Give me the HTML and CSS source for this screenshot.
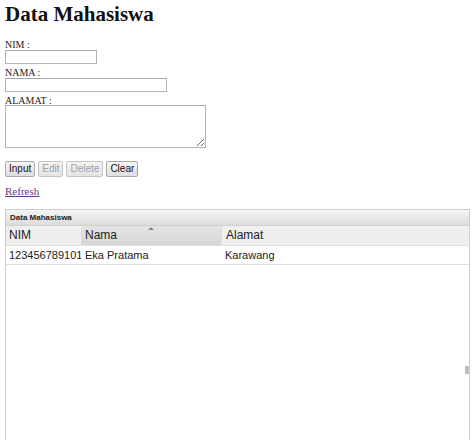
FILE: index.html
```
<!DOCTYPE html>
<html>
<head>
<meta charset="utf-8">
<link rel="stylesheet" href="styles.css">
</head>
<body>
<h1 class="title">Data Mahasiswa</h1>
<form class="form">
  <label class="lbl">NIM :</label>
  <input class="inp inp-nim" type="text">
  <label class="lbl">NAMA :</label>
  <input class="inp inp-nama" type="text">
  <label class="lbl">ALAMAT :</label>
  <textarea class="inp inp-alamat"></textarea>
  <div class="btns">
    <button type="button" class="btn">Input</button>
    <button type="button" class="btn dis">Edit</button>
    <button type="button" class="btn dis">Delete</button>
    <button type="button" class="btn">Clear</button>
  </div>
</form>
<a class="refresh" href="#">Refresh</a>
<div class="panel">
  <div class="panel-title">Data Mahasiswa</div>
  <div class="row head">
    <div class="cell c1">NIM</div>
    <div class="cell c2 sorted">Nama<span class="arrow"></span></div>
    <div class="cell c3">Alamat</div>
  </div>
  <div class="row data">
    <div class="cell c1">123456789101</div>
    <div class="cell c2">Eka Pratama</div>
    <div class="cell c3">Karawang</div>
  </div>
  <div class="thumb"></div>
</div>
</body>
</html>
```
FILE: styles.css
```
html, body { margin: 0; padding: 0; background: #fff; }
body { padding: 0 5px; font-family: "Liberation Serif", "Times New Roman", serif; color: #111; overflow: hidden; height: 440px; }
.title { margin: 0; padding-top: 2px; font-size: 21px; line-height: 24px; font-weight: bold; }
.form { display: flex; flex-direction: column; align-items: flex-start; margin-top: 14px; }
.lbl { font-size: 10px; line-height: 10px; height: 10px; color: #222; }
.inp { box-sizing: border-box; border: 1px solid #b5b5b5; border-top-color: #a8a8a8; background: #fff; margin: 0; padding: 0; font-size: 11px; display: block; }
.inp-nim { width: 92px; height: 14px; margin-bottom: 4px; }
.inp-nama { width: 162px; height: 14px; margin-bottom: 4px; }
.inp-alamat { width: 201px; height: 43px; margin-top: -1px; resize: both; }
.btns { display: flex; gap: 3px; margin-top: 13px; }
.btn { font-family: "Liberation Sans", Arial, sans-serif; font-size: 10px; height: 16px; line-height: 12px; padding: 0 3px; border: 1px solid #a9a9a9; border-radius: 2px; background: linear-gradient(#f6f6f6, #dedede); color: #111; margin: 0; }
.btn.dis { color: #a0a0a0; border-color: #c4c4c4; background: linear-gradient(#f4f4f4, #e4e4e4); }
.refresh { display: block; width: max-content; margin-top: 8px; font-size: 11px; line-height: 13px; color: #5a3b8c; text-decoration: underline; }
.panel { position: relative; margin-top: 11px; width: 465px; height: 260px; box-sizing: border-box; border: 1px solid #cfcfcf; border-bottom: none; font-family: "Liberation Sans", Arial, sans-serif; }
.panel-title { height: 15px; line-height: 15px; font-size: 8px; font-weight: bold; padding-left: 4px; color: #222; background: linear-gradient(#f4f4f4, #dcdcdc); border-bottom: 1px solid #d0d0d0; }
.row { display: flex; }
.cell { box-sizing: border-box; padding-left: 4px; white-space: nowrap; overflow: hidden; }
.c1 { width: 75px; padding-left: 3px; }
.c2 { width: 140px; position: relative; }
.c3 { flex: 1; }
.head { height: 19px; line-height: 19px; font-size: 12px; color: #222; background: #efefef; border-bottom: 1px solid #e0e0e0; }
.head .c3 { border-left: 1px solid #e2e2e2; }
.head .sorted { background: linear-gradient(#e4e4e4, #d6d6d6); }
.arrow { position: absolute; left: 67px; top: 1px; width: 0; height: 0; border-left: 3px solid transparent; border-right: 3px solid transparent; border-bottom: 3px solid #888; }
.data { height: 18px; line-height: 18px; font-size: 11px; color: #222; border-bottom: 1px solid #dcdcdc; }
.thumb { position: absolute; right: 0; top: 156px; width: 4px; height: 8px; background: #c0c0c0; }
```
